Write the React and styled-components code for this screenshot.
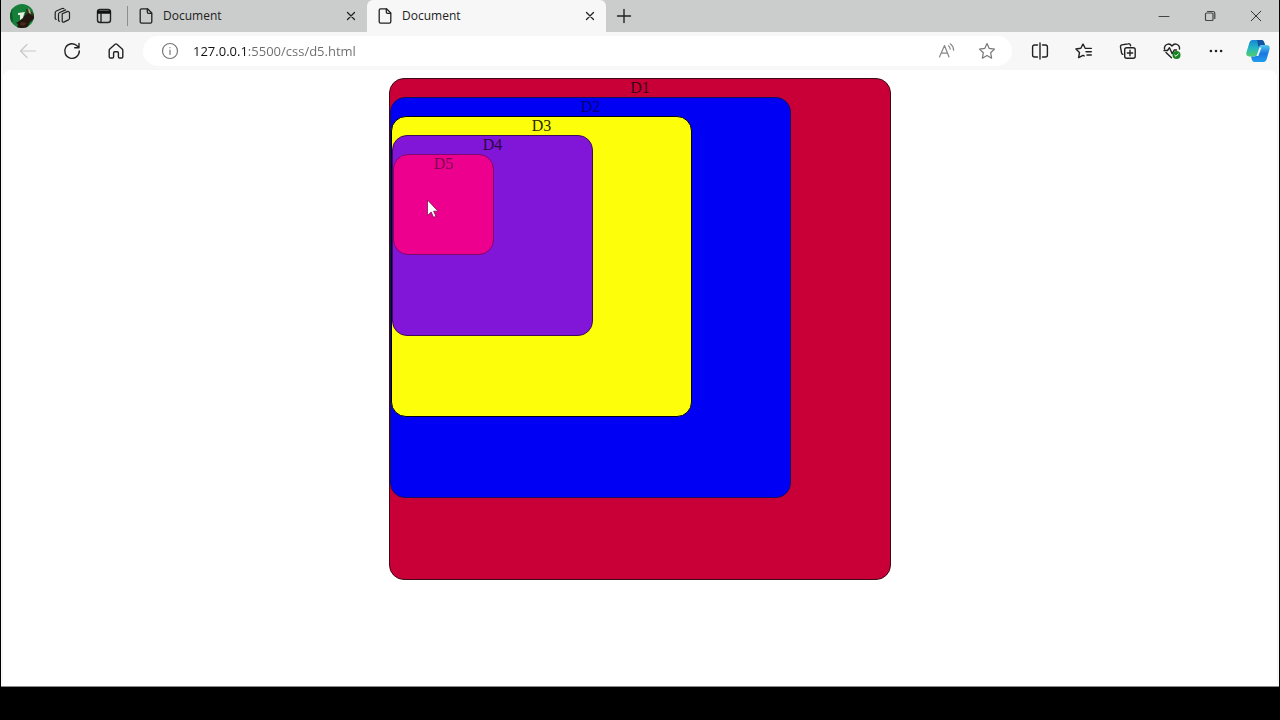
import React from 'react';
import styled, { createGlobalStyle, css } from 'styled-components';

const uiFont = '"Open Sans", "Noto Sans", sans-serif';

const GlobalStyle = createGlobalStyle`
  * {
    box-sizing: border-box;
  }

  body {
    margin: 0;
    background: #000;
  }
`;

const Desktop = styled.div`
  min-height: 100vh;
  display: flex;
  flex-direction: column;
  padding: 0 1px 33px;
  background: #000;
`;

const Browser = styled.div`
  flex: 1;
  display: flex;
  flex-direction: column;
  border-bottom: 1px solid #8c8c8c;
  background: #f7f7f7;
  font-family: ${uiFont};
  color: #222;
`;

const TabStrip = styled.header`
  height: 32px;
  display: flex;
  align-items: center;
  background: #cbcccc;
`;

const StripTools = styled.div`
  width: 127px;
  height: 32px;
  display: flex;
  align-items: center;
  border-right: 1px solid #8e8e8e;
  border-image: linear-gradient(#cbcccc 20%, #8e8e8e 20%, #8e8e8e 80%, #cbcccc 80%) 1;
`;

const IconButton = styled.button`
  width: ${({ width }) => width || 44}px;
  height: 32px;
  flex: none;
  display: flex;
  align-items: center;
  justify-content: center;
  padding: 0;
  border: 0;
  background: none;
  color: ${({ tone }) => tone || '#222'};
`;

const Tab = styled.div`
  flex: 0 1 239px;
  height: 32px;
  display: flex;
  align-items: center;
  gap: 9px;
  padding: 0 8px 0 10px;
  font-size: 12px;
  line-height: 16px;
  ${({ active }) => active && css`
    background: #f7f7f7;
    border-radius: 6px 6px 0 0;
  `};
`;

const TabTitle = styled.span`
  flex: 1;
`;

const WindowControls = styled.div`
  display: flex;
  margin-left: auto;
`;

const Toolbar = styled.nav`
  height: 38px;
  display: flex;
  align-items: center;
  padding: 0 1px 0 5px;
`;

const AddressBar = styled.div`
  flex: 1;
  height: 30px;
  display: flex;
  align-items: center;
  margin: 0 6px 0 5px;
  padding: 0 5px;
  border-radius: 15px;
  background: #fff;
`;

// the host part is dark, the rest of the address is grey
const AddressInput = styled.input`
  flex: 1;
  min-width: 0;
  padding: 0 0 0 1px;
  border: 0;
  outline: 0;
  font-family: ${uiFont};
  font-size: 13px;
  line-height: 20px;
  background: linear-gradient(to right, #111 56px, #6c6c6c 56px);
  background-clip: text;
  -webkit-text-fill-color: transparent;
`;

const Page = styled.main`
  flex: 1;
  margin: 0 2px;
  padding: 8px;
  border-radius: 8px 8px 0 0;
  background: #fff;
  font-family: "Liberation Serif", serif;
  font-size: 16px;
  line-height: 18px;
  color: #111;
  text-align: center;
`;

const Box = styled.div`
  position: relative;
  width: ${({ size }) => size}px;
  height: ${({ size }) => size}px;
  border: 1px solid ${({ edge }) => edge};
  border-radius: 15px;
  background: ${({ fill }) => fill};
  color: ${({ ink }) => ink};
  ${({ centered }) => centered && css`margin: 0 auto;`};
`;

const Pointer = styled.svg`
  position: absolute;
  top: 44px;
  left: 32px;
`;

const Icon = ({ size = 20, stroke = 1.2, children }) => (
  <svg
    width={size}
    height={size}
    viewBox={`0 0 ${size} ${size}`}
    fill="none"
    stroke="currentColor"
    strokeWidth={stroke}
    strokeLinecap="round"
    strokeLinejoin="round"
    aria-hidden="true"
  >
    {children}
  </svg>
);

const Avatar = () => (
  <svg width="24" height="24" viewBox="0 0 24 24" aria-hidden="true">
    <clipPath id="face"><circle cx="12" cy="12" r="12" /></clipPath>
    <g clipPath="url(#face)">
      <rect width="24" height="24" fill="#16803a" />
      <path d="M0 0h4L2 8l1 9-2 3-1-3z" fill="#0b5d2b" />
      <path d="M16 5l2 0 6 5v5l-6-1-3-4z" fill="#2b3f22" />
      <path d="M14 12l4-3 3 2 3 1v3l-4 3-3 6H7l1-4-2-1 5-3z" fill="#22160f" />
      <path d="M8 9l7-1-1 2-1 4-3 2v-5l-2 0z" fill="#e6efe6" />
      <path d="M18 4l2 2 1 4-2-1z" fill="#c7a58a" />
      <path d="M11 18l6 1-3 3-4-1z" fill="#4b2a1c" />
    </g>
  </svg>
);

const Workspaces = () => (
  <Icon>
    <path d="M9.2 7.8l5-2.2c1.1-.5 2.3.2 2.3 1.4v5.2c0 .8-.4 1.4-1.1 1.7l-4.6 2.2c-.8.4-1.6-.1-1.6-1z" />
    <path d="M6.5 15.2c-.6 0-1-.4-1-1V8.3c0-.8.5-1.5 1.2-1.8l5.9-2.6" />
    <path d="M3.2 13.3c-.6 0-1-.4-1-1V6.8c0-.8.5-1.5 1.2-1.8l5.7-2.5c.7-.3 1.3-.2 1.8.2" />
  </Icon>
);

const TabActions = () => (
  <Icon stroke={1.4}>
    <rect x="3.5" y="3.5" width="13" height="13" rx="2.5" />
    <path d="M4 5.5h12M4 6.7h12" stroke="#111" strokeWidth="2" />
    <path d="M7 7v9" />
  </Icon>
);

const Doc = () => (
  <Icon size={16} stroke={1.3}>
    <path d="M9.5.8H3.6c-.8 0-1.4.6-1.4 1.4v11.6c0 .8.6 1.4 1.4 1.4h8.8c.8 0 1.4-.6 1.4-1.4V5z" />
    <path d="M9.3 1v3c0 .8.5 1.3 1.3 1.3h3" />
  </Icon>
);

const Close = () => (
  <Icon size={10} stroke={1.3}><path d="M1.5 1.5l7 7M8.5 1.5l-7 7" /></Icon>
);

const Star = () => (
  <Icon><path d="M10 2.5l2.3 4.9 5.2.7-3.8 3.7.9 5.4-4.6-2.6-4.6 2.6.9-5.4-3.8-3.7 5.2-.7z" /></Icon>
);

const Favorites = () => (
  <Icon stroke={1.4}>
    <path d="M11.3 7.4h6M12 10.7h5.3M13 14h4.3" />
    <path d="M10.8 6.5L9 3 6.8 7.3l-4.9.7 3.6 3.6-.9 5L9 14.3l1.2.6" />
  </Icon>
);

const Collections = () => (
  <Icon stroke={1.4}>
    <rect x="6.7" y="6.7" width="10.5" height="10.5" rx="2" />
    <path d="M12 9.3v5.4M9.3 12h5.4" />
    <path d="M4.8 13.3c-.7-.1-1.1-.6-1.2-1.2L2.5 6c-.2-1 .4-1.9 1.4-2.1l6.5-1.2c.9-.2 1.7.4 2 1.3l.2.7" />
  </Icon>
);

const Essentials = () => (
  <Icon stroke={1.4}>
    <path d="M2.5 8c-.4-2.3 1-4.6 3.4-4.9C7.6 2.9 9 3.7 10 5c1-1.3 2.4-2.1 4.1-1.9C16.5 3.4 17.9 5.7 17.5 8M4 11.5l5.5 5.3" />
    <path d="M2 9.5h3.5l2-2.8 2.7 6 2-3.7h2.3" />
    <circle cx="14.5" cy="14" r="4" fill="#168321" stroke="none" />
    <path d="M12.8 14.2l1.2 1.1 2.3-2.5" stroke="#fff" strokeWidth="1" />
  </Icon>
);

const Copilot = () => (
  <svg width="24" height="24" viewBox="0 0 24 24" aria-hidden="true">
    <defs>
      <linearGradient id="left" x1="0" y1="0" x2="0" y2="1">
        <stop offset="0" stopColor="#1685d5" />
        <stop offset=".5" stopColor="#26b7c4" />
        <stop offset="1" stopColor="#50ce68" />
      </linearGradient>
      <linearGradient id="right" x1="0" y1="0" x2="0" y2="1">
        <stop offset="0" stopColor="#52c7ef" />
        <stop offset=".5" stopColor="#1a78df" />
        <stop offset="1" stopColor="#1e9cf0" />
      </linearGradient>
    </defs>
    <path d="M6.5 1h9c1.5 0 2.2 1 2.7 2.5L19 6h-3c-1.4 0-2 .8-2.4 2l-2.2 7c-.5 1.7-1.5 2.5-3.3 2.5H3.5C1 17.5-.2 15.7.4 13.4L3.3 4C3.9 2.1 4.900 1 6.5 1z" fill="url(#left)" />
    <path d="M11 1h4.5c1.5 0 2.2 1 2.7 2.5L19 6h-4l-2.5 2z" fill="#14539f" />
    <path d="M17.5 23h-9c-1.5 0-2.2-1-2.7-2.5L5 17.5h3.3c1.5 0 2.1-.8 2.5-2l2.2-7C13.5 6.8 14.5 6 16.3 6h4.2c2.5 0 3.7 1.8 3.1 4.1L20.7 20c-.6 1.9-1.6 3-3.2 3z" fill="url(#right)" />
    <path d="M13.5 8.5h2L12.3 17h-2z" fill="#e8f7fc" />
  </svg>
);

const boxes = [
  { label: 'D1', size: 502, fill: '#c90038', edge: '#3c0a18', ink: '#3a0714' },
  { label: 'D2', size: 401, fill: '#0000f5', edge: '#15105c', ink: '#000078' },
  { label: 'D3', size: 301, fill: '#fdff0a', edge: '#000018', ink: '#292908' },
  { label: 'D4', size: 201, fill: '#8216d8', edge: '#400c58', ink: '#28083f' },
  { label: 'D5', size: 101, fill: '#ed008e', edge: '#7c0870', ink: '#7c064e' },
];

const NestedBox = ({ level = 0 }) => {
  const { label, ...look } = boxes[level];
  return (
    <Box {...look} centered={level === 0}>
      {label}
      {level < boxes.length - 1 ? <NestedBox level={level + 1} /> : (
        <Pointer width="13" height="20" viewBox="0 0 13 20" aria-hidden="true">
          <path d="M1.5 1v15.5l3.7-3.5 2.3 5.3 2.4-1.1-2.3-5H12z" fill="#fff" stroke="#7c1555" strokeWidth=".8" />
        </Pointer>
      )}
    </Box>
  );
};

const DocumentTab = ({ active }) => (
  <Tab active={active}>
    <Doc />
    <TabTitle>Document</TabTitle>
    <IconButton width={16} aria-label="Close tab"><Close /></IconButton>
  </Tab>
);

const App = () => (
  <Desktop>
    <GlobalStyle />
    <Browser>
      <TabStrip>
        <StripTools>
          <IconButton width={42} aria-label="Profile"><Avatar /></IconButton>
          <IconButton width={40} aria-label="Workspaces"><Workspaces /></IconButton>
          <IconButton width={42} aria-label="Tab actions"><TabActions /></IconButton>
        </StripTools>
        <DocumentTab />
        <DocumentTab active />
        <IconButton width={36} aria-label="New tab">
          <Icon size={16} stroke={1.4}><path d="M8 1.5v13M1.5 8h13" /></Icon>
        </IconButton>
        <WindowControls>
          <IconButton width={46} tone="#444" aria-label="Minimize">
            <Icon size={12} stroke={1}><path d="M1 6.5h10" /></Icon>
          </IconButton>
          <IconButton width={46} tone="#444" aria-label="Restore">
            <Icon size={12} stroke={1.2}>
              <rect x="1.5" y="3" width="7.5" height="7.5" rx="1" />
              <path d="M3.5 1.5H8.8c1.2 0 2 .8 2 2v5" />
            </Icon>
          </IconButton>
          <IconButton width={46} tone="#333" aria-label="Close window">
            <Icon size={12} stroke={1}><path d="M1.2 1.2l9.6 9.6M10.8 1.2l-9.6 9.6" /></Icon>
          </IconButton>
        </WindowControls>
      </TabStrip>
      <Toolbar>
        <IconButton tone="#c8c8c8" aria-label="Back">
          <Icon><path d="M17.5 10h-15M9 3.5L2.5 10 9 16.5" /></Icon>
        </IconButton>
        <IconButton aria-label="Refresh">
          <Icon stroke={1.4}><path d="M17.3 10a7.3 7.3 0 1 1-2-5l1.7 1.6M17 2.5v4.3h-4.3" /></Icon>
        </IconButton>
        <IconButton aria-label="Home">
          <Icon stroke={1.4}><path d="M9.1 3.2c.5-.5 1.3-.5 1.8 0l5.3 4.7c.4.4.6.8.6 1.3v6.6c0 .7-.5 1.2-1.2 1.2h-2c-.7 0-1.2-.5-1.2-1.2V12c0-.7-.5-1.2-1.2-1.2H8.8c-.7 0-1.2.5-1.2 1.2v3.8c0 .7-.5 1.2-1.2 1.2h-2c-.7 0-1.2-.5-1.2-1.2V9.2c0-.5.2-.9.6-1.3z" /></Icon>
        </IconButton>
        <AddressBar>
          <IconButton tone="#777" aria-label="Site information">
            <Icon>
              <circle cx="10" cy="10" r="7.5" />
              <path d="M10 9v4.5M10 6.5v.2" />
            </Icon>
          </IconButton>
          <AddressInput aria-label="Address" defaultValue="127.0.0.1:5500/css/d5.html" />
          <IconButton width={40} tone="#888" aria-label="Read aloud">
            <Icon>
              <path d="M2.5 16L7.5 4.5 12 16M4.2 12.2h6.2" />
              <path d="M11.5 4.8c1 .8 1.6 2 1.7 3.4M13.3 2.8c2 1.5 3.2 3.8 3.3 6.4" />
            </Icon>
          </IconButton>
          <IconButton width={40} tone="#777" aria-label="Add to favorites"><Star /></IconButton>
        </AddressBar>
        <IconButton aria-label="Split screen">
          <Icon stroke={1.4}>
            <path d="M10 2v16M7.5 4H4.6c-1.2 0-2 .8-2 2v8c0 1.2.8 2 2 2h2.9M12.5 4h2.9c1.2 0 2 .8 2 2v8c0 1.2-.8 2-2 2h-2.9" />
          </Icon>
        </IconButton>
        <IconButton aria-label="Favorites"><Favorites /></IconButton>
        <IconButton aria-label="Collections"><Collections /></IconButton>
        <IconButton aria-label="Browser essentials"><Essentials /></IconButton>
        <IconButton aria-label="Settings and more">
          <Icon stroke={2.6}><path d="M4.9 10h.01M10 10h.01M15.1 10h.01" /></Icon>
        </IconButton>
        <IconButton width={40} aria-label="Copilot"><Copilot /></IconButton>
      </Toolbar>
      <Page><NestedBox /></Page>
    </Browser>
  </Desktop>
);

export default App;
